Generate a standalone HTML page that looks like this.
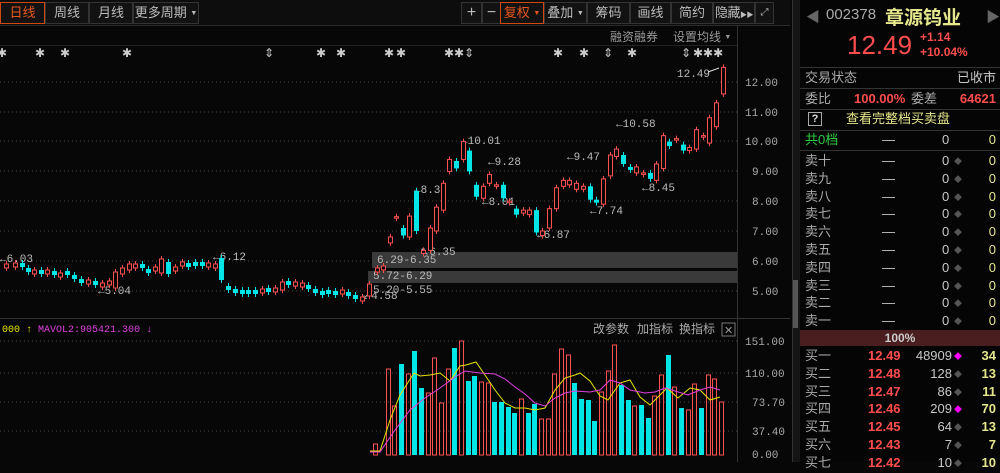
<!DOCTYPE html>
<html><head><meta charset="utf-8">
<style>
*{margin:0;padding:0;box-sizing:border-box}
body{width:1000px;height:462px;background:#070707;overflow:hidden;position:relative;font-family:"Liberation Sans","Noto Sans CJK SC",sans-serif;color:#c8c8c8}
.a{position:absolute;white-space:nowrap}
.btn{position:absolute;top:2px;height:22px;border:1px solid #333;background:#121212;color:#bbb;font-size:13px;line-height:20px;text-align:center;white-space:nowrap;overflow:hidden}
.on{border-color:#d04a10;color:#e8561a}
.row{position:absolute;left:800px;width:200px;height:18px;font-size:13px;line-height:18px}
.row span{position:absolute}
.g{color:#aaa}.r{color:#ff4d4d}.y{color:#e6e68c}.w{color:#c8c8c8}
.dot{color:#555;font-size:8px}
.ar{font-size:7px;vertical-align:2px}
</style></head><body>
<div class="a" style="left:0;top:0;width:790px;height:26px;background:#0d0d0d;border-bottom:1px solid #2a2a2a"></div>
<div class="btn on" style="left:0;width:45px">日线</div>
<div class="btn" style="left:45px;width:44px">周线</div>
<div class="btn" style="left:89px;width:44px">月线</div>
<div class="btn" style="left:133px;width:66px">更多周期 <span class="ar">▼</span></div>
<div class="btn" style="left:461px;width:21px;font-size:16px">+</div>
<div class="btn" style="left:482px;width:19px;font-size:16px">−</div>
<div class="btn on" style="left:500px;width:44px">复权 <span class="ar">▼</span></div>
<div class="btn" style="left:544px;width:43px">叠加 <span class="ar">▼</span></div>
<div class="btn" style="left:587px;width:43px">筹码</div>
<div class="btn" style="left:630px;width:41px">画线</div>
<div class="btn" style="left:671px;width:42px">简约</div>
<div class="btn" style="left:713px;width:42px;letter-spacing:-0.5px">隐藏<span style="font-size:7px">▶▶</span></div>
<div class="btn" style="left:755px;width:19px;font-size:10px">⤢</div>
<div class="a" style="left:0;top:45px;width:737px;border-top:1px solid #222"></div>
<div class="a" style="left:610px;top:28px;font-size:12px;color:#999">融资融券</div>
<div class="a" style="left:673px;top:28px;font-size:12px;color:#999">设置均线 <span class="ar">▼</span></div>
<div class="a" style="left:737px;top:26px;width:1px;height:436px;background:#333"></div>
<div class="a" style="left:792px;top:0;width:8px;height:462px;background:#151515;border-left:1px solid #333"></div>
<div class="a" style="left:793px;top:280px;width:5px;height:48px;background:#555"></div>
<div class="a" style="left:0;top:318px;width:790px;height:1px;background:#333"></div>

<svg class="a" style="left:0;top:0" width="792" height="462" id="sv">
<g stroke="#444" stroke-dasharray="1,3">
<line x1="0" y1="82" x2="737" y2="82"/><line x1="0" y1="112" x2="737" y2="112"/><line x1="0" y1="141" x2="737" y2="141"/><line x1="0" y1="171" x2="737" y2="171"/><line x1="0" y1="201" x2="737" y2="201"/><line x1="0" y1="231" x2="737" y2="231"/><line x1="0" y1="261" x2="737" y2="261"/><line x1="0" y1="291" x2="737" y2="291"/>
<line x1="0" y1="341" x2="737" y2="341"/><line x1="0" y1="373" x2="737" y2="373"/><line x1="0" y1="402" x2="737" y2="402"/><line x1="0" y1="431" x2="737" y2="431"/>
</g>
<rect x="372" y="252" width="365" height="16" fill="#3a3a3a"/>
<rect x="368" y="271" width="369" height="12" fill="#3a3a3a"/>
<g font-family="Liberation Mono,monospace" font-size="11" fill="#aaa">
<text x="745" y="86">12.00</text><text x="745" y="116">11.00</text><text x="745" y="145">10.00</text><text x="752" y="175">9.00</text><text x="752" y="205">8.00</text><text x="752" y="235">7.00</text><text x="752" y="265">6.00</text><text x="752" y="295">5.00</text>
<text x="745" y="345">151.00</text><text x="745" y="377">110.00</text><text x="752" y="406">73.70</text><text x="752" y="435">37.40</text><text x="752" y="458">0.00</text>
</g>
<g font-family="Liberation Mono,monospace" font-size="11" fill="#bbb">
<text x="0" y="262">←6.03</text><text x="213" y="260">←6.12</text><text x="98" y="294">←5.04</text><text x="362" y="299">↙4.58</text>
<text x="373" y="279">5.72-6.29</text><text x="377" y="263">6.29-6.35</text><text x="373" y="293">5.20-5.55</text><text x="420" y="255">↖6.35</text>
<text x="414" y="193">←8.37</text><text x="461" y="144">←10.01</text><text x="488" y="165">←9.28</text><text x="482" y="205">←8.01</text>
<text x="537" y="238">←6.87</text><text x="567" y="160">←9.47</text><text x="590" y="214">←7.74</text><text x="616" y="127">←10.58</text>
<text x="642" y="191">←8.45</text><text x="677" y="77">12.49</text>
</g>
<line x1="708" y1="72" x2="719" y2="68" stroke="#ddd"/>
<g font-size="12" fill="#ccc" font-family="DejaVu Sans,sans-serif">
<text x="-3" y="57">✱</text><text x="35" y="57">✱</text><text x="60" y="57">✱</text><text x="122" y="57">✱</text><text x="264" y="57">⇕</text><text x="316" y="57">✱</text><text x="336" y="57">✱</text><text x="384" y="57">✱</text><text x="396" y="57">✱</text><text x="444" y="57">✱✱</text><text x="464" y="57">⇕</text>
<text x="553" y="57">✱</text><text x="579" y="57">✱</text><text x="603" y="57">⇕</text><text x="627" y="57">✱</text><text x="681" y="57">⇕</text><text x="693" y="57">✱✱✱</text>
</g>
<g id="cd"></g><g id="vb"></g>
<text x="2" y="332" font-family="Liberation Mono,monospace" font-size="10" fill="#e6e600">000 <tspan fill="#e6e600">↑</tspan> <tspan fill="#e040e0">MAVOL2:905421.300 ↓</tspan></text>
<g font-size="12" fill="#aaa" font-family="Liberation Sans,Noto Sans CJK SC,sans-serif"><text x="593" y="333">改参数</text><text x="637" y="333">加指标</text><text x="679" y="333">换指标</text></g>
<rect x="722" y="323" width="13" height="13" fill="none" stroke="#777"/><text x="724" y="334" font-size="11" fill="#999">✕</text>
</svg>

<div class="a" style="left:800px;top:0;width:200px;height:462px;background:#050505"></div>
<div class="a" style="left:806px;top:7px;font-size:14px;color:#666">◀</div>
<div class="a" style="left:986px;top:7px;font-size:14px;color:#666">▶</div>
<div class="a" style="left:826px;top:6px;font-size:15px;color:#aaa">002378</div>
<div class="a" style="left:885px;top:3px;font-size:19px;color:#e6e68c;font-weight:bold">章源钨业</div>
<div class="a" style="left:847px;top:30px;font-size:26px;color:#ff4d4d">12.49</div>
<div class="a" style="left:920px;top:30px;font-size:12px;color:#ff4d4d;font-weight:bold">+1.14</div>
<div class="a" style="left:920px;top:45px;font-size:12px;color:#ff4d4d;font-weight:bold">+10.04%</div>
<div class="a" style="left:800px;top:67px;width:200px;border-top:1px solid #333"></div>
<div class="row" style="top:69px"><span class="g" style="left:5px">交易状态</span><span class="w" style="right:4px">已收市</span></div>
<div class="a" style="left:800px;top:88px;width:200px;border-top:1px solid #333"></div>
<div class="row" style="top:90px"><span class="g" style="left:5px">委比</span><span class="r" style="left:54px;font-weight:bold">100.00%</span><span class="g" style="left:111px">委差</span><span class="r" style="right:4px;font-weight:bold">64621</span></div>
<div class="a" style="left:800px;top:109px;width:200px;border-top:1px solid #333"></div>
<div class="a" style="left:808px;top:112px;width:14px;height:14px;border:1px solid #aaa;font-size:11px;text-align:center;line-height:12px;color:#ddd;font-weight:bold">?</div>
<div class="row" style="top:110px"><span class="y" style="left:46px">查看完整档买卖盘</span></div>
<div class="a" style="left:800px;top:130px;width:200px;border-top:1px solid #333"></div>
<div class="row" style="top:131px"><span style="left:5px;color:#2ecc40">共0档</span><span class="w" style="left:82px">—</span><span class="w" style="left:142px">0</span><span class="y" style="right:4px">0</span></div>
<div class="a" style="left:800px;top:150px;width:200px;border-top:1px solid #333"></div>
<div id="ob"></div>
<div class="a" style="left:800px;top:330px;width:200px;height:16px;background:#4a1e1e;text-align:center;font-size:12px;line-height:16px;color:#ccc;font-weight:bold">100%</div>
<script>
var ob='',s=['卖十','卖九','卖八','卖七','卖六','卖五','卖四','卖三','卖二','卖一'];
s.forEach(function(n,i){ob+='<div class="row" style="top:'+(152+i*17.8)+'px"><span class="g" style="left:5px">'+n+'</span><span class="w" style="left:82px">—</span><span class="w" style="left:142px">0</span><span class="dot" style="left:154px;top:1px">◆</span><span class="y" style="right:4px">0</span></div>';});
var b=[['买一','12.49','48909','34',1],['买二','12.48','128','13'],['买三','12.47','86','11'],['买四','12.46','209','70',1],['买五','12.45','64','13'],['买六','12.43','7','7'],['买七','12.42','10','10']];
b.forEach(function(r,i){ob+='<div class="row" style="top:'+(347+i*17.8)+'px"><span class="g" style="left:5px">'+r[0]+'</span><span class="r" style="left:68px;font-weight:bold">'+r[1]+'</span><span class="w" style="right:48px">'+r[2]+'</span><span class="dot" style="left:154px;top:1px;'+(r[4]?'color:#f0f':'')+'">◆</span><span class="y" style="right:4px;font-weight:bold">'+r[3]+'</span></div>';});
document.getElementById('ob').innerHTML=ob;
function Y(p){return 82+(12-p)*29.8}
var R='#ff5050',C='#00e5e5',h='';
function cand(x,o,c,hi,lo){var up=c>=o,col=up?R:C,t=Math.min(Y(o),Y(c)),bh=Math.max(1,Math.abs(Y(o)-Y(c)));
hi=hi||Math.max(o,c)+0.1;lo=lo||Math.min(o,c)-0.1;
h+='<line x1="'+(x+2.5)+'" y1="'+Y(hi)+'" x2="'+(x+2.5)+'" y2="'+Y(lo)+'" stroke="'+col+'"/>';
h+=up?'<rect x="'+(x+0.5)+'" y="'+t+'" width="4" height="'+bh+'" fill="#070707" stroke="'+col+'"/>':'<rect x="'+x+'" y="'+t+'" width="5" height="'+bh+'" fill="'+col+'"/>';}
var L=[[4,266,1],[13,265,1],[20,265,0],[26,270,0],[32,272,1],[39,272,0],[45,272,1],[52,273,0],[58,275,1],[65,273,0],[72,277,0],[79,281,0],[86,282,1],[93,283,0],[100,285,1],[107,283,1],[113,280,1],[120,271,1],[127,267,1],[133,266,1],[140,266,0],[146,271,0],[153,269,1],[159,266,1],[166,268,0],[173,269,1],[180,264,1],[186,265,0],[193,264,0],[200,264,0],[206,265,1],[213,266,1],[219,269,0],[226,288,0],[233,291,0],[240,292,0],[246,292,0],[253,292,0],[260,291,1],[266,290,0],[273,290,1],[280,286,1],[286,283,0],[293,284,1],[300,285,1],[306,287,0],[313,291,0],[320,293,0],[326,292,0],[333,293,0],[340,292,1],[346,294,0],[353,297,0],[360,299,1],[367,290,1],[375,270,1],[381,268,1]];
var big={113:8,159:7,166:6,219:11,367:6,280:4,120:3,127:3};
L.forEach(function(a){var p=12-(a[1]-82)/29.8,d=(big[a[0]]||2)/29.8;if(a[2])cand(a[0],p-d,p+d);else cand(a[0],p+d,p-d);});
var Rr=[[388,6.6,6.8],[394,7.43,7.48],[401,7.1,6.85],[407,6.8,7.5],[414,8.35,7.0],[421,6.25,6.35],[428,6.35,7.1],[434,7.0,7.8],[441,7.7,8.6],[447,9.0,9.4],[454,9.35,9.1],[461,9.4,10.0],[467,9.7,9.0],[474,8.55,8.15],[481,8.1,8.5],[487,8.6,8.9],[494,8.5,8.55],[501,8.55,8.1],[507,7.95,8.0],[514,7.75,7.55],[521,7.6,7.7],[527,7.55,7.7],[534,7.7,6.95],[540,6.85,7.0],[547,7.1,7.75],[554,7.75,8.45],[561,8.5,8.7],[567,8.55,8.7],[574,8.4,8.6],[581,8.4,8.5],[588,8.5,8.05],[594,8.05,7.95],[601,7.9,8.75],[608,8.85,9.55],[614,9.5,9.75],[621,9.55,9.25],[628,9.15,9.05],[634,8.95,9.15],[641,8.9,8.95],[648,8.95,8.75],[654,8.7,9.25],[661,9.1,10.2],[667,10.0,9.85],[674,10.05,10.1],[681,9.9,9.7],[687,9.7,9.8],[694,9.75,10.4],[701,10.15,10.2],[707,9.95,10.8],[714,10.5,11.3],[721,11.6,12.49]];
Rr.forEach(function(a){cand(a[0],a[1],a[2]);});
document.getElementById('cd').innerHTML=h;
var V=[[373,444,1],[379,456,1],[386,369,1],[392,406,1],[399,364,0],[406,374,1],[412,351,0],[419,388,0],[426,393,1],[432,358,1],[439,403,1],[446,369,1],[452,348,0],[459,341,1],[466,381,0],[472,376,0],[479,382,1],[486,383,1],[492,402,0],[499,402,0],[506,407,0],[512,413,0],[519,399,1],[526,413,0],[532,404,0],[539,419,1],[546,419,1],[552,374,1],[559,349,1],[566,355,1],[572,383,0],[579,399,0],[586,400,0],[592,421,0],[599,392,1],[606,371,1],[612,345,1],[619,385,0],[626,400,0],[632,406,1],[639,405,0],[646,418,0],[652,396,1],[659,375,1],[666,355,0],[672,387,1],[679,408,0],[686,410,1],[692,384,1],[699,408,0],[706,375,1],[712,379,1],[719,402,1]];
var v='';V.forEach(function(a){v+=a[2]?'<rect x="'+(a[0]+0.5)+'" y="'+a[1]+'" width="4" height="'+(455-a[1])+'" fill="none" stroke="'+R+'"/>':'<rect x="'+a[0]+'" y="'+a[1]+'" width="5" height="'+(455-a[1])+'" fill="'+C+'"/>';});
v+='<polyline fill="none" stroke="#e6e600" points="370,451 380,451 390,420 400,395 414,373 420,376 430,375 440,373 450,381 460,366 466,365 476,362 485,375 495,390 505,403 515,408 525,408 535,410 545,408 555,390 565,378 575,375 580,373 590,381 600,396 608,400 620,383 630,380 640,397 650,405 660,395 667,388 678,398 690,388 700,390 710,400 720,397"/>';
v+='<polyline fill="none" stroke="#e040e0" points="370,452 380,452 395,430 410,410 425,398 440,388 455,377 465,371 480,373 495,374 505,379 515,387 525,394 535,403 545,406 555,398 565,393 575,391 590,392 600,390 610,380 620,383 630,390 645,393 655,392 665,388 675,391 688,395 700,390 710,387 720,390"/>';
document.getElementById('vb').innerHTML=v;
</script>
</body></html>
